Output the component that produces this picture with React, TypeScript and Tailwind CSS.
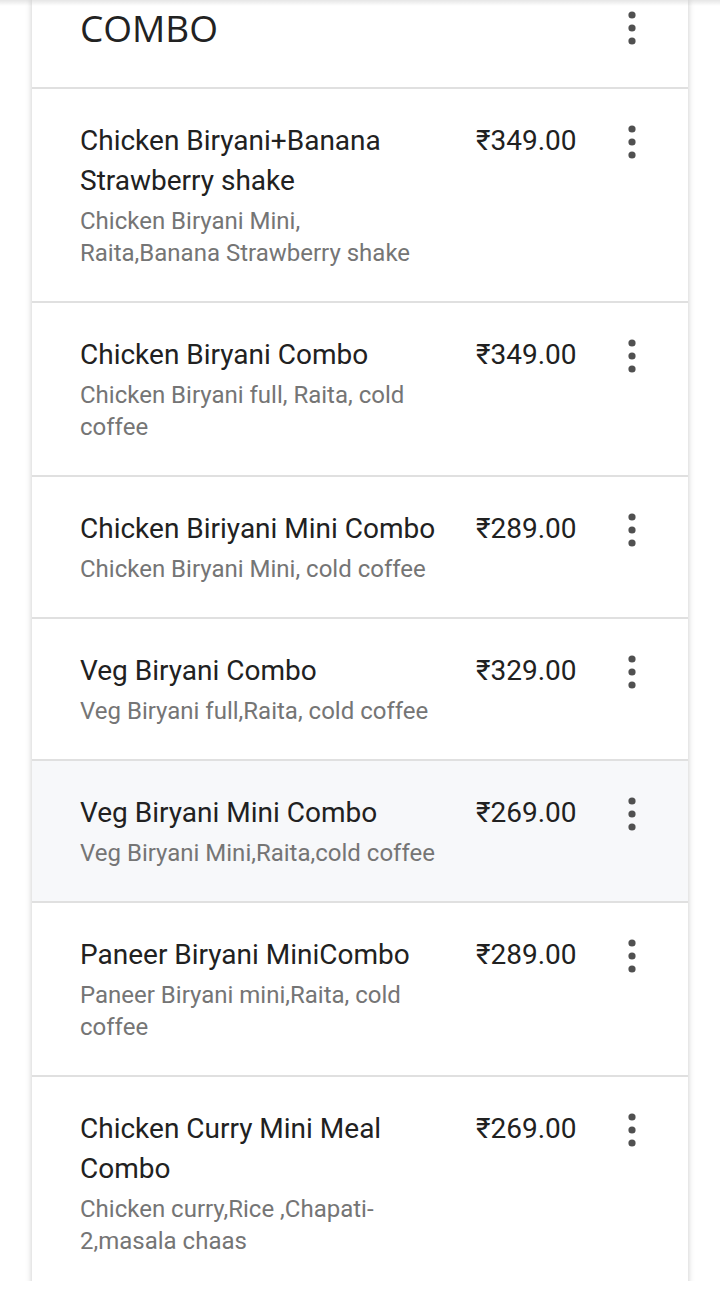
import React from 'react'

type Item = {
  name: string
  desc: string
  price: string
  highlight?: boolean
}

const ITEMS: Item[] = [
  { name: 'Chicken Biryani+Banana Strawberry shake', desc: 'Chicken Biryani Mini, Raita,Banana Strawberry shake', price: '₹349.00' },
  { name: 'Chicken Biryani Combo', desc: 'Chicken Biryani full, Raita, cold coffee', price: '₹349.00' },
  { name: 'Chicken Biriyani Mini Combo', desc: 'Chicken Biryani Mini, cold coffee', price: '₹289.00' },
  { name: 'Veg Biryani Combo', desc: 'Veg Biryani full,Raita, cold coffee', price: '₹329.00' },
  { name: 'Veg Biryani Mini Combo', desc: 'Veg Biryani Mini,Raita,cold coffee', price: '₹269.00', highlight: true },
  { name: 'Paneer Biryani MiniCombo', desc: 'Paneer Biryani mini,Raita, cold coffee', price: '₹289.00' },
  { name: 'Chicken Curry Mini Meal Combo', desc: 'Chicken curry,Rice ,Chapati-2,masala chaas', price: '₹269.00' },
]

// vertical three-dot menu
const Dots = () => (
  <svg width="8" height="34" viewBox="0 0 8 34" className="block">
    <circle cx="4" cy="4" r="3.6" fill="#505050" />
    <circle cx="4" cy="17" r="3.6" fill="#505050" />
    <circle cx="4" cy="30" r="3.6" fill="#505050" />
  </svg>
)

export default function App() {
  return (
    <div className="relative w-[720px] h-[1292px] bg-white overflow-hidden" style={{ fontFamily: 'Roboto, "Liberation Sans", sans-serif' }}>
      <div className="absolute top-0 inset-x-0 h-[6px] bg-gradient-to-b from-black/10 to-transparent z-10" />

      <div className="h-[1281px] overflow-hidden">
        <div className="mx-[32px] bg-white shadow-[0_0_6px_rgba(0,0,0,0.22)]">
          <div className="flex items-center justify-between h-[56px] pl-[48px] pr-[20px] border-b-2 border-[#e0e0e0] box-content pb-[31px]">
            <h1 className="text-[37px] text-[#222] leading-none -mt-[2px]" style={{ fontFamily: '"Open Sans", "Noto Sans", sans-serif' }}>
              COMBO
            </h1>
            <div className="w-[72px] flex justify-center">
              <Dots />
            </div>
          </div>

          {ITEMS.map((item, idx) => (
            <div
              key={idx}
              className={`flex items-start pl-[48px] pr-[20px] pt-[32px] pb-[32px] ${idx < ITEMS.length - 1 ? 'border-b-2 border-[#e0e0e0]' : ''} ${item.highlight ? 'bg-[#f7f8fa]' : ''}`}
            >
              <div className="w-[362px]">
                <p className="text-[28px] leading-[40px] text-[#212121]">{item.name}</p>
                <p className="mt-[4px] text-[24px] leading-[32px] text-[#757575]">{item.desc}</p>
              </div>
              <div className="ml-[34px] w-[120px] text-[28px] leading-[40px] text-[#212121]">{item.price}</div>
              <div className="w-[72px] flex justify-center pt-[4px]">
                <Dots />
              </div>
            </div>
          ))}
        </div>
      </div>
    </div>
  )
}
